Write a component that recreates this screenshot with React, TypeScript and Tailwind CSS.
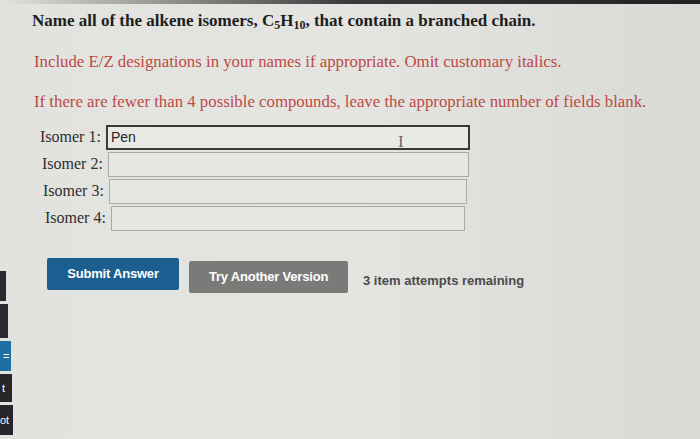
import { useState } from 'react';

const serif = { fontFamily: '"Liberation Serif", "Times New Roman", serif' };
const sans = { fontFamily: '"Liberation Sans", Arial, sans-serif' };

function IsomerRow({ n, value, focused, cls }: { n: number; value?: string; focused?: boolean; cls: string }) {
  return (
    <div className={`flex items-center h-[26px] ${cls}`}>
      <label className="w-[66px] shrink-0 text-[16px] text-[#2e2e2e] leading-none" style={serif}>
        Isomer {n}:
      </label>
      <div
        className={`relative h-[25px] flex-1 flex items-center px-[3px] text-[14px] text-[#222] ${
          focused ? 'border-2 border-[#3a3a3a] bg-[#e9eae6]' : 'border border-[#a9aaa6] bg-[#e6e7e3]'
        }`}
        style={sans}
      >
        {value}
        {focused && <span className="absolute left-[290px] top-[2px] text-[17px] text-[#6b6b6b] font-light" style={serif}>I</span>}
      </div>
    </div>
  );
}

export default function App() {
  const [vals] = useState(['Pen', '', '', '']);
  const rowCls = ['ml-[8px] w-[430px]', 'ml-[10px] w-[427px]', 'ml-[11px] w-[424px]', 'ml-[13px] w-[420px]'];

  return (
    <div className="relative w-[700px] h-[439px] overflow-hidden bg-linear-to-r from-[#e2e3df] via-[#e4e5e1] to-[#d9dad6]">
      <div className="h-[4px] w-full bg-linear-to-r from-transparent via-[#3a3a3a] to-[#222]" />

      <div className="flex h-[435px]">
        <div className="w-[13px] shrink-0 flex flex-col justify-end gap-[3px] pb-[4px]">
          <div className="h-[30px] w-[6px] bg-[#2a2a2e]" />
          <div className="h-[34px] w-[8px] bg-[#2a2a2e]" />
          <div className="h-[30px] w-[11px] bg-[#1f6fa3] text-white text-[11px] leading-[30px] overflow-hidden" style={sans}>&nbsp;=</div>
          <div className="h-[28px] w-[12px] bg-[#25252a] text-white text-[11px] leading-[28px] overflow-hidden pl-[2px]" style={sans}>t</div>
          <div className="h-[30px] w-[13px] bg-[#25252a] text-white text-[11px] leading-[30px] overflow-hidden" style={sans}>ot</div>
        </div>

        <div className="flex-1 pl-[19px] pt-[6px]">
          <h1 className="text-[17px] font-bold text-[#1e1e1e] leading-[22px]" style={serif}>
            Name all of the alkene isomers, C<sub className="text-[12px]">5</sub>H<sub className="text-[12px]">10</sub>, that contain a branched chain.
          </h1>
          <p className="mt-[20px] ml-[2px] text-[16.8px] text-[#bd4a44] leading-[20px]" style={serif}>
            Include E/Z designations in your names if appropriate. Omit customary italics.
          </p>
          <p className="mt-[20px] ml-[2px] text-[16.8px] text-[#bd4a44] leading-[20px]" style={serif}>
            If there are fewer than 4 possible compounds, leave the appropriate number of fields blank.
          </p>

          <div className="mt-[12px] flex flex-col gap-[1px]">
            {vals.map((v, i) => (
              <IsomerRow key={i} n={i + 1} value={v} focused={i === 0} cls={rowCls[i]} />
            ))}
          </div>

          <div className="mt-[27px] ml-[15px] flex items-start gap-[10px]" style={sans}>
            <button className="h-[32px] w-[132px] rounded-[2px] bg-[#1b5e8f] text-white text-[13px] font-bold tracking-[-0.2px]">
              Submit Answer
            </button>
            <button className="mt-[3px] h-[32px] w-[159px] rounded-[2px] bg-[#7a7b78] text-white text-[13px] font-bold tracking-[-0.2px]">
              Try Another Version
            </button>
            <span className="mt-[13px] ml-[5px] text-[13px] font-bold text-[#4a4a4a]">3 item attempts remaining</span>
          </div>
        </div>
      </div>
    </div>
  );
}
